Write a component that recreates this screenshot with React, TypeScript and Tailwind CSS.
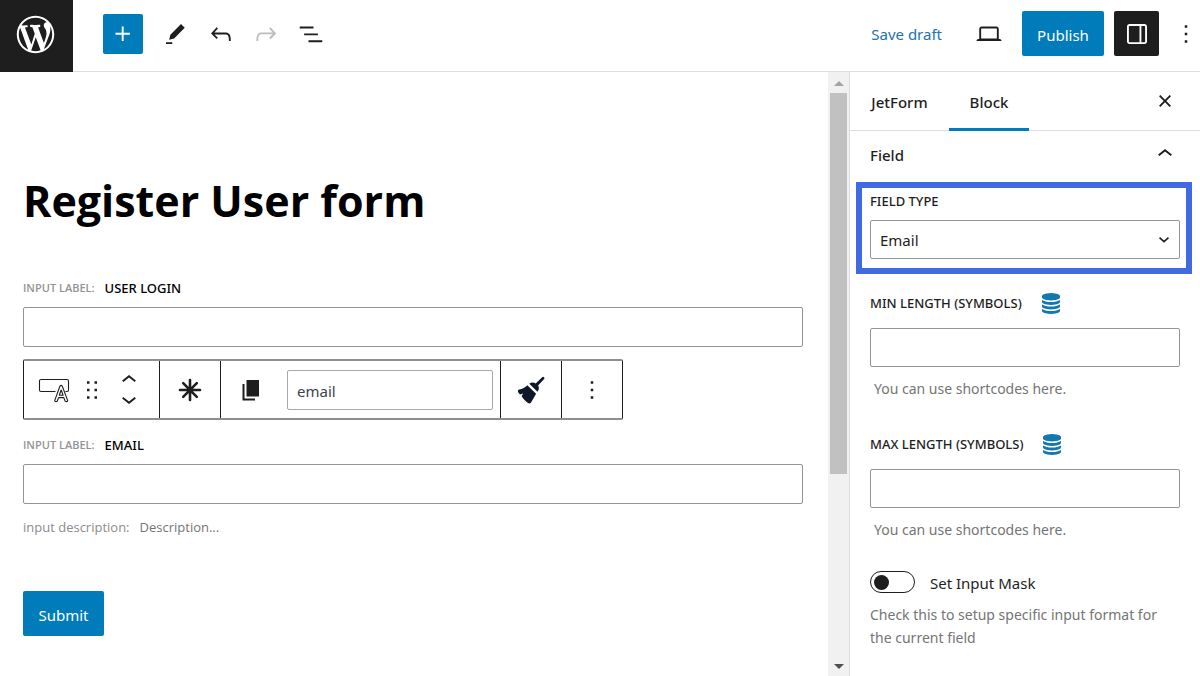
import type { ReactNode } from 'react';

const ICONS = {
  plus: 'M11 12.5V17.5H12.5V12.5H17.5V11H12.5V6H11V11H6V12.5H11Z',
  pencil: 'm19 7-3-3-8.5 8.5-1 4 4-1L19 7Zm-10 11.5H4V20h5v-1.5Z',
  undo: 'M18.3 11.7c-.6-.6-1.4-.9-2.3-.9H6.7l2.9-3.3-1.1-1-4.5 5L8.5 16l1-1-2.7-2.7H16c.5 0 .9.2 1.3.5 1 1 1 3.4 1 4.5v.3h1.5v-.2c0-1.5 0-4.3-1.5-5.7z',
  redo: 'M15.6 6.5l-1.1 1 2.9 3.3H8c-.9 0-1.7.3-2.3.9-1.4 1.5-1.4 4.2-1.4 5.6v.2h1.5v-.3c0-1.1 0-3.5 1-4.5.3-.3.7-.5 1.3-.5h9.2L14.5 15l1.1 1.1 4.6-4.6-4.6-5z',
  list: 'M3 6h11v1.5H3V6Zm3.5 5.5h11V13h-11v-1.5ZM21 17H10v1.5h11V17Z',
  laptop:
    'M20.5 16h-.7V8c0-1.1-.9-2-2-2H6.2c-1.1 0-2 .9-2 2v8h-.7c-.8 0-1.5.7-1.5 1.5h20c0-.8-.7-1.5-1.5-1.5zM5.7 8c0-.3.2-.5.5-.5h11.6c.3 0 .5.2.5.5v7.6H5.7V8z',
  drawer:
    'M18 4H6c-1.1 0-2 .9-2 2v12c0 1.1.9 2 2 2h12c1.1 0 2-.9 2-2V6c0-1.1-.9-2-2-2zm-4 14.5H6c-.3 0-.5-.2-.5-.5V6c0-.3.2-.5.5-.5h8v13zm4.5-.5c0 .3-.2.5-.5.5h-2.5v-13H18c.3 0 .5.2.5.5v12z',
  more: 'M13 19h-2v-2h2v2zm0-6h-2v-2h2v2zm0-6h-2V5h2v2z',
  close:
    'M12 13.06l3.712 3.713 1.061-1.06L13.061 12l3.712-3.712-1.06-1.06L12 10.938 8.288 7.227l-1.061 1.06L10.939 12l-3.712 3.712 1.06 1.061L12 13.061z',
  up: 'M6.5 12.4L12 8l5.5 4.4-.9 1.2L12 10l-4.5 3.6-1-1.2z',
  down: 'M17.5 11.6L12 16l-5.5-4.4.9-1.2L12 14l4.5-3.6 1 1.2z',
  drag: 'M8 7h2V5H8v2zm0 6h2v-2H8v2zm0 6h2v-2H8v2zm6-14v2h2V5h-2zm0 8h2v-2h-2v2zm0 6h2v-2h-2v2z',
};

function Icon({ name }: { name: keyof typeof ICONS }) {
  return (
    <svg viewBox="0 0 24 24" className="size-[30px] shrink-0" fill="currentColor" aria-hidden="true">
      <path d={ICONS[name]} />
    </svg>
  );
}

function WordPressLogo() {
  return (
    <svg viewBox="-2 -2 24 24" className="size-[45px]" fill="currentColor" aria-hidden="true">
      <path d="M20 10c0-5.51-4.49-10-10-10C4.48 0 0 4.49 0 10c0 5.52 4.48 10 10 10 5.51 0 10-4.48 10-10zM7.78 15.37L4.37 6.22c.55-.02 1.17-.08 1.17-.08.5-.06.44-1.13-.06-1.11 0 0-1.45.11-2.37.11-.18 0-.37 0-.58-.01C4.12 2.69 6.87 1.11 10 1.11c2.33 0 4.45.87 6.05 2.34-.68-.11-1.65.39-1.65 1.58 0 .74.45 1.36.9 2.1.35.61.55 1.36.55 2.46 0 1.49-1.4 5-1.4 5l-3.03-8.37c.54-.02.82-.17.82-.17.5-.05.44-1.25-.06-1.22 0 0-1.44.12-2.38.12-.87 0-2.33-.12-2.33-.12-.5-.03-.56 1.2-.06 1.22l.92.08 1.26 3.41zM17.41 10c.24-.64.74-1.87.43-4.25.7 1.29 1.05 2.71 1.05 4.25 0 3.29-1.73 6.24-4.4 7.78.97-2.59 1.94-5.2 2.92-7.78zM6.1 18.09C3.12 16.65 1.11 13.53 1.11 10c0-1.3.23-2.48.72-3.59C3.25 10.3 4.67 14.2 6.1 18.09zm4.03-6.63l2.58 6.98c-.86.29-1.76.45-2.71.45-.79 0-1.57-.11-2.29-.33.81-2.38 1.62-4.74 2.42-7.1z" />
    </svg>
  );
}

function DatabaseIcon() {
  return (
    <svg viewBox="0 0 1536 1792" className="h-[21px] w-[18px]" fill="currentColor" aria-hidden="true">
      <path d="M768 768q237 0 443-43t325-127v170q0 69-103 128t-280 93.5-385 34.5-385-34.5-280-93.5-103-128v-170q119 84 325 127t443 43zm0 768q237 0 443-43t325-127v170q0 69-103 128t-280 93.5-385 34.5-385-34.5-280-93.5-103-128v-170q119 84 325 127t443 43zm0-384q237 0 443-43t325-127v170q0 69-103 128t-280 93.5-385 34.5-385-34.5-280-93.5-103-128v-170q119 84 325 127t443 43zm0-1152q208 0 385 34.5t280 93.5 103 128v128q0 69-103 128t-280 93.5-385 34.5-385-34.5-280-93.5-103-128v-128q0-69 103-128t280-93.5 385-34.5z" />
    </svg>
  );
}

function TextFieldIcon() {
  return (
    <svg viewBox="0 0 32 26" className="h-[26px] w-8" fill="none" stroke="currentColor" aria-hidden="true">
      <path d="M17.500 14.500H3A1.500 1.500 0 0 1 1.500 13V4A1.500 1.500 0 0 1 3 2.500h26A1.500 1.500 0 0 1 30.500 4v9a1.500 1.500 0 0 1-1.500 1.500h-1.500" strokeWidth="1.1" />
      <path
        d="M16.700 23.600 21.900 9.300q1.200-1.800 2.400 0l5.400 14.300q-.4 1.600-2.500.7l-1.400-3.700h-5.200l-1.400 3.700q-2 .9-2.500-.7ZM21.300 18.200h3.800L23.200 13Z"
        strokeWidth="1.1"
        strokeLinejoin="round"
      />
    </svg>
  );
}

function AsteriskIcon() {
  return (
    <svg viewBox="0 0 24 24" className="size-6" stroke="currentColor" strokeWidth="2.600" strokeLinecap="round" aria-hidden="true">
      <path d="M12 2v20M2 12h20M5.200 5.200l13.600 13.600M18.800 5.200 5.200 18.800" />
    </svg>
  );
}

function CopyIcon() {
  return (
    <svg viewBox="0 0 18 22" className="h-[22px] w-[18px]" fill="currentColor" aria-hidden="true">
      <path d="M4.500 1h12.500v16.500H4.500z" />
      <path d="M.500 5h2v14.500h10.500v2H.500z" />
    </svg>
  );
}

function BrushIcon() {
  return (
    <svg viewBox="0 0 28 28" className="size-7" fill="currentColor" aria-hidden="true">
      <path d="M25.200 1.300a1.300 1.300 0 0 1 1.900 1.800l-6 6.300c1.300 1.800.9 4.500-.6 6.300L12.300 7.700c1.800-1.500 4.600-1.600 6.400-.2z" />
      <path d="m10.300 9.300 8.800 8.500-5.200 9c-.7.900-1.900.9-2.900.2-2.700-1.800-5-4.300-6.400-7l1.600-2.600-3.200 1C1.700 17.300 1.100 16.200.9 15c0-.7.500-1.200 1.200-1.400 3.200-.6 6.200-1.900 8.200-4.300Z" />
    </svg>
  );
}

function ToolButton({ label, className = '', children }: { label: string; className?: string; children: ReactNode }) {
  return (
    <button type="button" aria-label={label} className={`flex items-center justify-center ${className}`}>
      {children}
    </button>
  );
}

function Header() {
  return (
    <header className="flex h-[72px] shrink-0 items-center border-b border-[#dedede]">
      <a href="#dashboard" aria-label="Dashboard" className="flex h-[72px] w-[73px] items-center justify-center bg-[#1e1e1e] pr-0.5 pb-0.5 text-white">
        <WordPressLogo />
      </a>
      <div className="ml-[30px] flex flex-1 items-center gap-[15px] pb-1">
        <ToolButton label="Add block" className="mr-[3px] size-10 rounded-xs bg-[#007cba] text-white">
          <Icon name="plus" />
        </ToolButton>
        <ToolButton label="Tools"><Icon name="pencil" /></ToolButton>
        <ToolButton label="Undo"><Icon name="undo" /></ToolButton>
        <ToolButton label="Redo" className="text-[#bdbdbd]"><Icon name="redo" /></ToolButton>
        <ToolButton label="List view"><Icon name="list" /></ToolButton>
      </div>
      <div className="flex items-center pb-1">
        <button type="button" className="mr-8 text-[15px] leading-6 text-[#2271b1]">Save draft</button>
        <ToolButton label="View" className="mr-[18px]"><Icon name="laptop" /></ToolButton>
        <button type="button" className="mr-2.5 h-[45px] w-[82px] rounded-xs bg-[#007cba] pt-[3px] text-[15px] text-white">Publish</button>
        <ToolButton label="Settings" className="size-[45px] rounded-xs bg-[#1e1e1e] text-white"><Icon name="drawer" /></ToolButton>
        <ToolButton label="Options" className="ml-3 w-[29px]"><Icon name="more" /></ToolButton>
      </div>
    </header>
  );
}

function FormField({ id, label }: { id: string; label: string }) {
  return (
    <div>
      <label htmlFor={id} className="flex h-6 items-center gap-2.5">
        <span className="font-['Open_Sans','Noto_Sans',sans-serif] text-[11px] font-semibold text-[#949494]">INPUT LABEL:</span>
        <span className="pt-px text-[13px] font-medium text-black">{label}</span>
      </label>
      <input id={id} type="text" className="mt-[7px] block h-10 w-full rounded-xs border border-[#949494] px-2.5" />
    </div>
  );
}

function BlockToolbar() {
  return (
    <div className="flex h-[61px] w-[600px] divide-x divide-[#1e1e1e] rounded-xs border-x border-y-2 border-x-[#1e1e1e] border-y-[#8f8f8f]">
      <div className="flex w-[136px] items-center pl-3.5">
        <ToolButton label="Text field"><TextFieldIcon /></ToolButton>
        <ToolButton label="Drag" className="ml-[7px]"><Icon name="drag" /></ToolButton>
        <div className="ml-[7px] flex flex-col">
          <ToolButton label="Move up" className="h-[19px]"><Icon name="up" /></ToolButton>
          <ToolButton label="Move down" className="h-[19px]"><Icon name="down" /></ToolButton>
        </div>
      </div>
      <ToolButton label="Required" className="w-[61px]"><AsteriskIcon /></ToolButton>
      <div className="flex w-[280px] items-center pr-[7px] pl-[21px]">
        <ToolButton label="Copy name"><CopyIcon /></ToolButton>
        <input
          type="text"
          aria-label="Field name"
          defaultValue="email"
          className="ml-[27px] h-10 min-w-0 flex-1 rounded-xs border border-[#a8a8a8] px-[9px] pt-0.5 text-[15px] text-[#3c434a]"
        />
      </div>
      <ToolButton label="Style" className="w-[61px] text-[#0f172a]"><BrushIcon /></ToolButton>
      <ToolButton label="More" className="flex-1"><Icon name="more" /></ToolButton>
    </div>
  );
}

function Canvas() {
  return (
    <main className="min-w-0 flex-1 overflow-hidden pt-[98px] pr-[25px] pl-[23px]">
      <h1 className="font-['Open_Sans','Noto_Sans',sans-serif] text-[43px] leading-[62px] font-bold text-black">Register User form</h1>
      <div className="mt-11">
        <FormField id="user-login" label="USER LOGIN" />
      </div>
      <div className="mt-3 mb-[13px]">
        <BlockToolbar />
      </div>
      <FormField id="email" label="EMAIL" />
      <div className="mt-3 flex h-6 items-center gap-2.5 font-['Open_Sans','Noto_Sans',sans-serif] text-[13px]">
        <span className="text-[#8c8c8c]">input description:</span>
        <span className="text-[#757575]">Description...</span>
      </div>
      <button type="button" className="mt-[51px] h-[45px] w-[81px] rounded-xs bg-[#007cba] pt-[3px] text-[15px] text-white">Submit</button>
    </main>
  );
}

function Scrollbar() {
  return (
    <div className="flex w-[21px] shrink-0 flex-col items-center bg-[#f1f1f1]" aria-hidden="true">
      <svg viewBox="0 0 10 5" className="mt-[9px] mb-[7px] h-[5px] w-2.5" fill="#a3a3a3"><path d="M0 5 5 0l5 5z" /></svg>
      <div className="h-[381px] w-[17px] bg-[#c1c1c1]" />
      <svg viewBox="0 0 10 5" className="mt-auto mb-[7px] h-[5px] w-2.5" fill="#505050"><path d="m0 0 5 5 5-5z" /></svg>
    </div>
  );
}

function LengthField({ id, label }: { id: string; label: string }) {
  return (
    <div className="px-5">
      <div className="flex h-6 items-center gap-5">
        <label htmlFor={id} className="pt-px text-[13px] font-medium">{label}</label>
        <button type="button" aria-label="Insert preset" className="text-[#1378b0]"><DatabaseIcon /></button>
      </div>
      <input id={id} type="text" className="mt-[13px] block h-[39px] w-full rounded-xs border border-[#949494] px-2.5" />
      <p className="mt-2.5 px-1 text-[14px] leading-6 text-[#757575]">You can use shortcodes here.</p>
    </div>
  );
}

function Sidebar() {
  return (
    <aside className="w-[351px] shrink-0 overflow-hidden border-l border-[#dedede]">
      <div className="flex h-[59px] items-stretch border-b border-[#dedede] text-[15px] font-medium">
        <button type="button" className="w-[99px] pt-0.5">JetForm</button>
        <button type="button" className="-mb-px w-20 border-b-3 border-[#007cba] pt-[5px]">Block</button>
        <ToolButton label="Close settings" className="mr-5 ml-auto"><Icon name="close" /></ToolButton>
      </div>
      <button type="button" className="flex h-[51px] w-full items-start justify-between px-5 pt-2 text-[15px] leading-8 font-medium">
        Field
        <Icon name="up" />
      </button>
      <div className="mr-2 ml-1.5 h-[92px] border-6 border-[#4169e1] pr-1.5 pl-2">
        <label htmlFor="field-type" className="block pt-px text-[13px] leading-6 font-medium">FIELD TYPE</label>
        <div className="relative mt-[7px]">
          <select id="field-type" className="h-[39px] w-full appearance-none rounded-xs border border-[#949494] px-[9px] pt-0.5 text-[15px]">
            <option>Email</option>
          </select>
          <svg viewBox="0 0 10 6" className="pointer-events-none absolute top-[17px] right-[11px] h-1.5 w-2.5" fill="none" stroke="currentColor" strokeWidth="1.600" aria-hidden="true">
            <path d="m.5.600 4.500 4 4.500-4" />
          </svg>
        </div>
      </div>
      <div className="mt-4 flex flex-col gap-[31px] pt-px">
        <LengthField id="min-length" label="MIN LENGTH (SYMBOLS)" />
        <LengthField id="max-length" label="MAX LENGTH (SYMBOLS)" />
      </div>
      <div className="mt-7 px-5">
        <label className="flex h-6 items-center gap-[15px] text-[15px]">
          <input
            type="checkbox"
            role="switch"
            className="h-[22px] w-[45px] appearance-none rounded-full border border-[#1e1e1e] p-[3px] before:block before:size-[15px] before:rounded-full before:bg-[#1e1e1e] checked:before:ml-[22px]"
          />
          <span className="pt-0.5">Set Input Mask</span>
        </label>
        <p className="mt-[9px] text-[14px] leading-[23px] text-[#757575]">Check this to setup specific input format for the current field</p>
      </div>
    </aside>
  );
}

export default function App() {
  return (
    <div className="flex h-screen flex-col overflow-hidden bg-white font-['Noto_Sans','Open_Sans',sans-serif] text-[#1e1e1e]">
      <Header />
      <div className="flex min-h-0 flex-1">
        <Canvas />
        <Scrollbar />
        <Sidebar />
      </div>
    </div>
  );
}
